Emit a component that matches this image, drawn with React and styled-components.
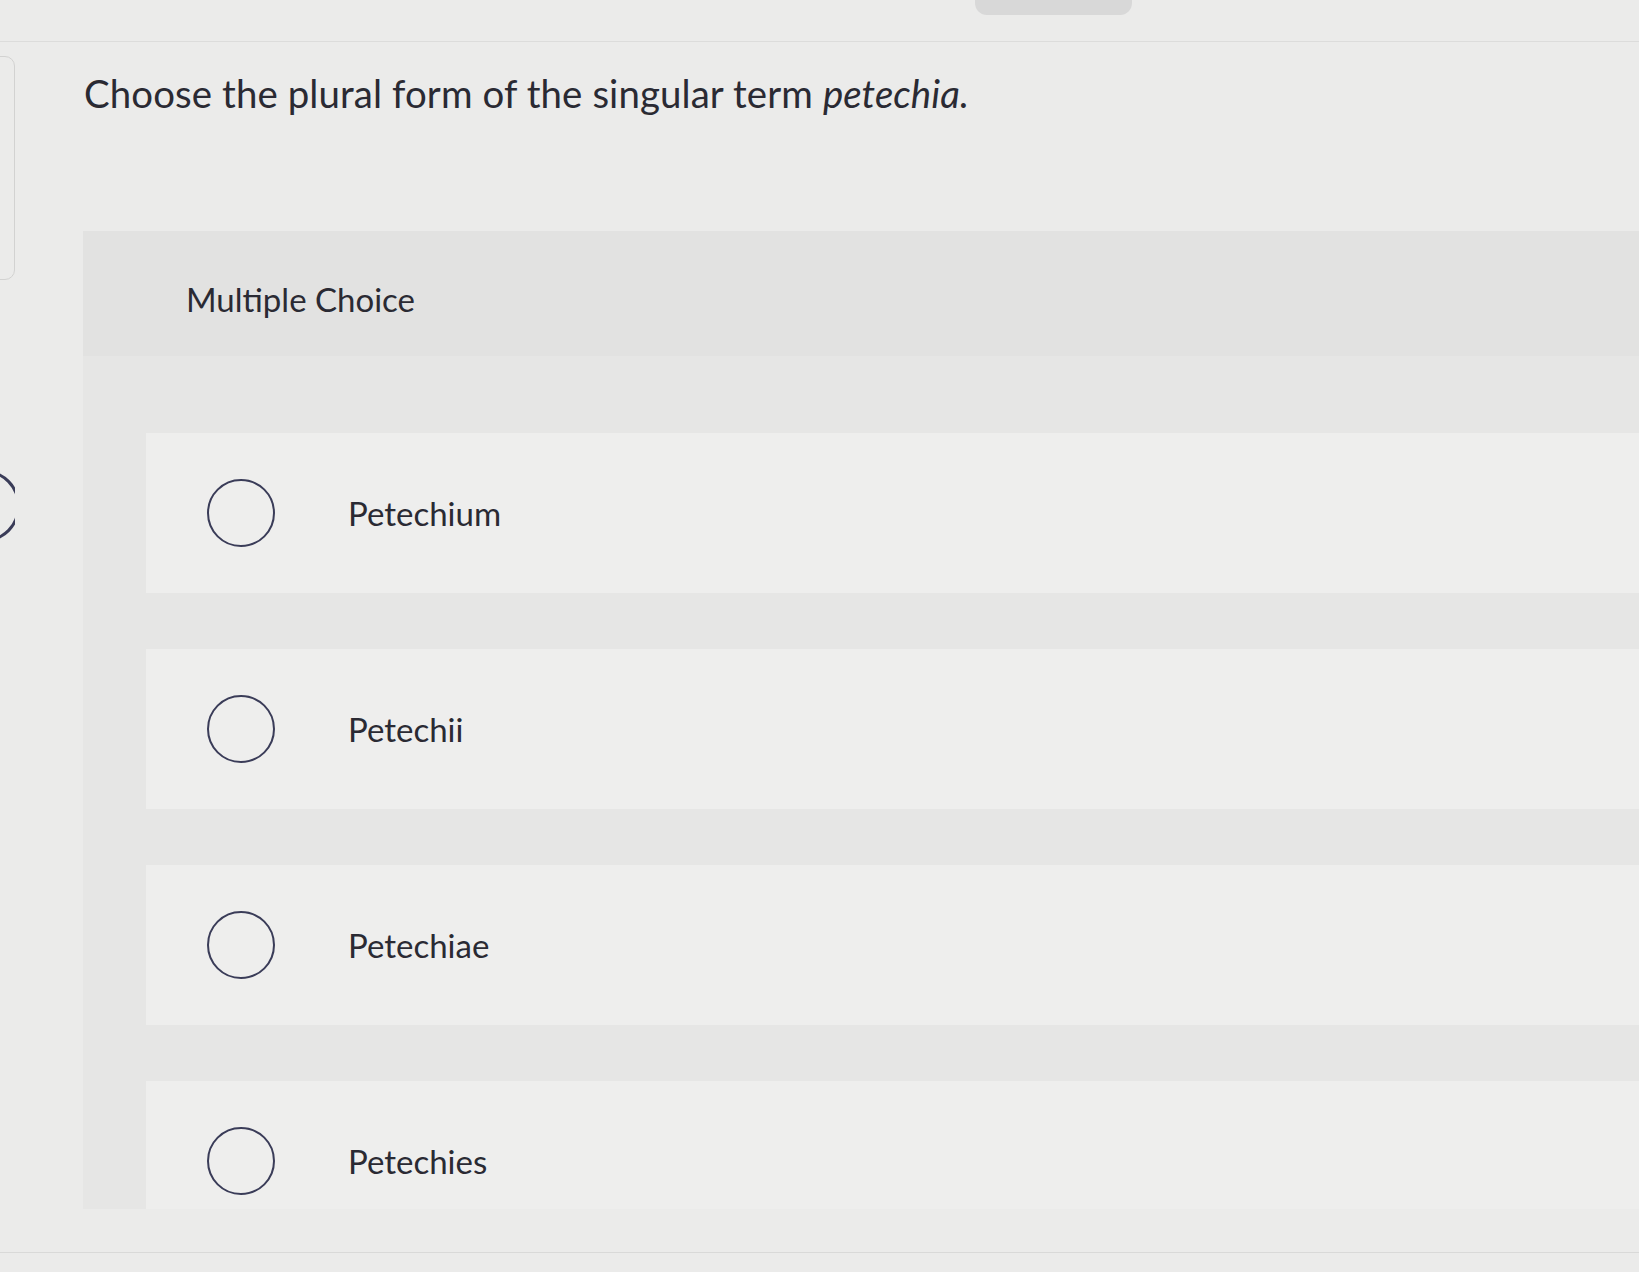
import React from "react";
import styled, { createGlobalStyle } from "styled-components";

const Global = createGlobalStyle`
  html, body { margin: 0; padding: 0; background: #ebebea; }
  body { font-family: Lato, "Open Sans", "Liberation Sans", sans-serif; color: #2a2a33; }
`;

const Page = styled.div`
  width: 1639px;
  height: 1272px;
  overflow: hidden;
  display: flex;
  flex-direction: column;
  background: #ebebea;
`;

const TopBar = styled.div`
  height: 42px;
  flex: none;
  display: flex;
  padding-left: 975px;
  border-bottom: 1px solid #dcdcdb;
  box-sizing: border-box;
`;

const Pill = styled.div`
  width: 157px;
  height: 15px;
  background: #d8d8d8;
  border-radius: 0 0 12px 12px;
`;

const Body = styled.div`
  flex: 1;
  display: flex;
  min-height: 0;
`;

const Rail = styled.div`
  width: 15px;
  flex: none;
  overflow: hidden;
  display: flex;
  flex-direction: column;
`;

const RailCard = styled.div`
  width: 40px;
  height: 222px;
  margin-top: 14px;
  margin-left: -27px;
  border: 1px solid #d2d2d1;
  border-radius: 10px;
  flex: none;
`;

const RailButton = styled.div`
  width: 64px;
  height: 66px;
  margin-top: 190px;
  margin-left: -50px;
  border: 3px solid #3a3c58;
  border-radius: 50%;
  flex: none;
`;

const Main = styled.div`
  flex: 1;
  padding-left: 68px;
  display: flex;
  flex-direction: column;
  min-width: 0;
`;

const Title = styled.h1`
  margin: 29px 0 0 1px;
  font-size: 38.4px;
  line-height: 44px;
  font-weight: 400;
  color: #2a2a33;
  letter-spacing: 0.1px;
  flex: none;

  em { font-style: italic; }
`;

const Panel = styled.section`
  margin-top: 116px;
  height: 978px;
  overflow: hidden;
  background: #e6e6e5;
  display: flex;
  flex-direction: column;
  flex: none;
`;

const PanelHeader = styled.div`
  height: 125px;
  flex: none;
  box-sizing: border-box;
  padding: 10px 0 0 103px;
  display: flex;
  align-items: center;
  background: #e2e2e1;
  font-size: 33px;
  color: #2a2a33;
`;

const Options = styled.div`
  padding: 77px 0 0 63px;
  display: flex;
  flex-direction: column;
  gap: 56px;
  flex: none;
`;

const Option = styled.label`
  height: 160px;
  flex: none;
  display: flex;
  align-items: center;
  padding-left: 61px;
  gap: 73px;
  background: #eeeeed;
  cursor: pointer;
`;

const Radio = styled.span`
  width: 64px;
  height: 64px;
  border: 2.5px solid #3a3c58;
  border-radius: 50%;
  flex: none;
`;

const OptionText = styled.span`
  font-size: 33px;
  color: #2a2a33;
`;

const FooterRule = styled.div`
  margin-top: 43px;
  margin-left: -83px;
  border-top: 1px solid #d9d9d8;
  flex: none;
`;

const options = ["Petechium", "Petechii", "Petechiae", "Petechies"];

export default function App() {
  return (
    <Page>
      <Global />
      <TopBar>
        <Pill />
      </TopBar>
      <Body>
        <Rail>
          <RailCard />
          <RailButton />
        </Rail>
        <Main>
          <Title>
            Choose the plural form of the singular term <em>petechia.</em>
          </Title>
          <Panel>
            <PanelHeader>Multiple Choice</PanelHeader>
            <Options>
              {options.map((o) => (
                <Option key={o}>
                  <Radio />
                  <OptionText>{o}</OptionText>
                </Option>
              ))}
            </Options>
          </Panel>
          <FooterRule />
        </Main>
      </Body>
    </Page>
  );
}
